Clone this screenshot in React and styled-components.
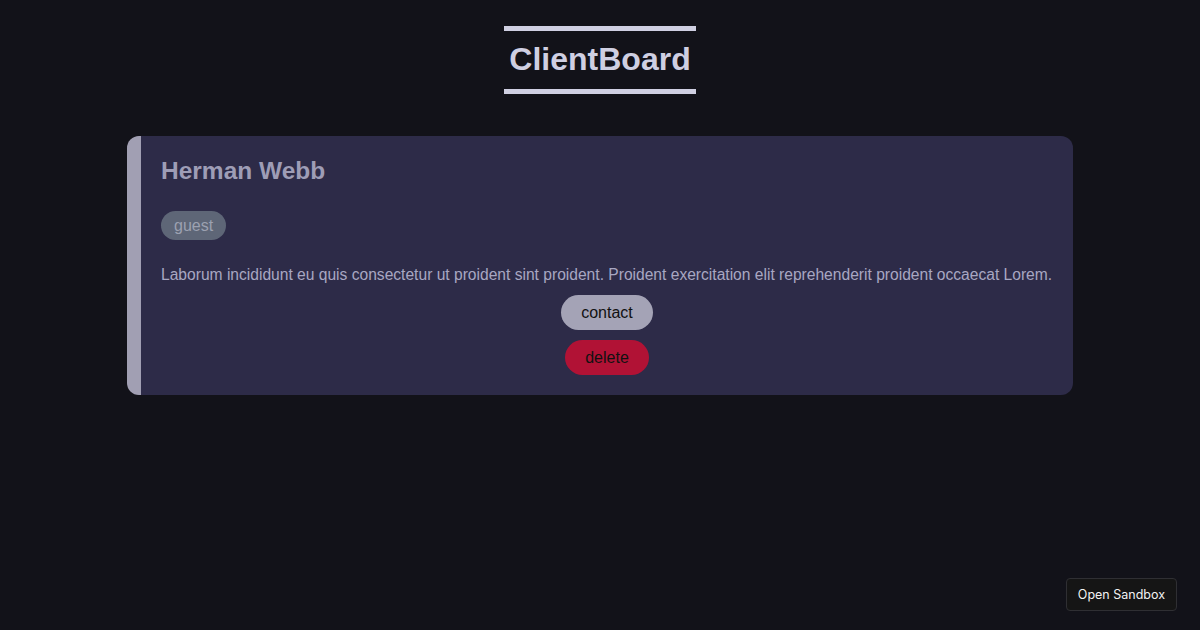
import React from "react";
import styled, { createGlobalStyle } from "styled-components";

const Global = createGlobalStyle`
  html, body { margin: 0; padding: 0; background: #121219; }
  body { font-family: "Liberation Sans", Arial, sans-serif; min-height: 630px; }
`;

const Page = styled.div`
  padding: 26px 8px 0;
  display: flex;
  flex-direction: column;
  align-items: center;
  gap: 42px;
`;

const Title = styled.h1`
  margin: 0;
  padding: 10px 5px 11px;
  border-top: 5px solid #cfcfe2;
  border-bottom: 5px solid #cfcfe2;
  color: #cfcfe2;
  font-size: 32px;
  font-weight: 700;
  line-height: 37px;
`;

const Card = styled.section`
  box-sizing: border-box;
  width: 946px;
  background: #2d2b48;
  border-left: 14px solid #a19fb3;
  border-radius: 12px;
  padding: 21px 20px 20px 20px;
  display: flex;
  flex-direction: column;
`;

const Name = styled.h2`
  margin: 0;
  color: #9e9db6;
  font-size: 24.5px;
  font-weight: 700;
  line-height: 28px;
`;

const Tag = styled.span`
  align-self: flex-start;
  margin-top: 26px;
  padding: 5px 13px;
  border-radius: 15px;
  background: #5e6677;
  color: #9ca1b1;
  font-size: 16px;
  line-height: 19px;
`;

const Text = styled.p`
  margin: 26px 0 0;
  color: #a8a7c2;
  font-size: 15.6px;
  line-height: 18px;
`;

const Actions = styled.div`
  display: flex;
  flex-direction: column;
  align-items: center;
  gap: 10px;
  margin-top: 11px;
`;

const Button = styled.button`
  border: none;
  border-radius: 18px;
  padding: 8px 20px;
  font-family: "Liberation Sans", Arial, sans-serif;
  font-size: 16px;
  line-height: 19px;
  color: #111;
  background: ${(p) => (p.$danger ? "#b11235" : "#a4a3b6")};
  cursor: pointer;
`;

const Sandbox = styled.button`
  position: fixed;
  right: 23px;
  bottom: 19px;
  height: 33px;
  padding: 0 11px;
  background: #151515;
  border: 1px solid #2f2f33;
  border-radius: 4px;
  color: #f2f2f2;
  font-family: Inter, "Liberation Sans", sans-serif;
  font-size: 12.5px;
`;

export default function App() {
  return (
    <>
      <Global />
      <Page>
        <Title>ClientBoard</Title>
        <Card>
          <Name>Herman Webb</Name>
          <Tag>guest</Tag>
          <Text>
            Laborum incididunt eu quis consectetur ut proident sint proident. Proident exercitation elit reprehenderit proident occaecat Lorem.
          </Text>
          <Actions>
            <Button>contact</Button>
            <Button $danger>delete</Button>
          </Actions>
        </Card>
      </Page>
      <Sandbox>Open Sandbox</Sandbox>
    </>
  );
}
